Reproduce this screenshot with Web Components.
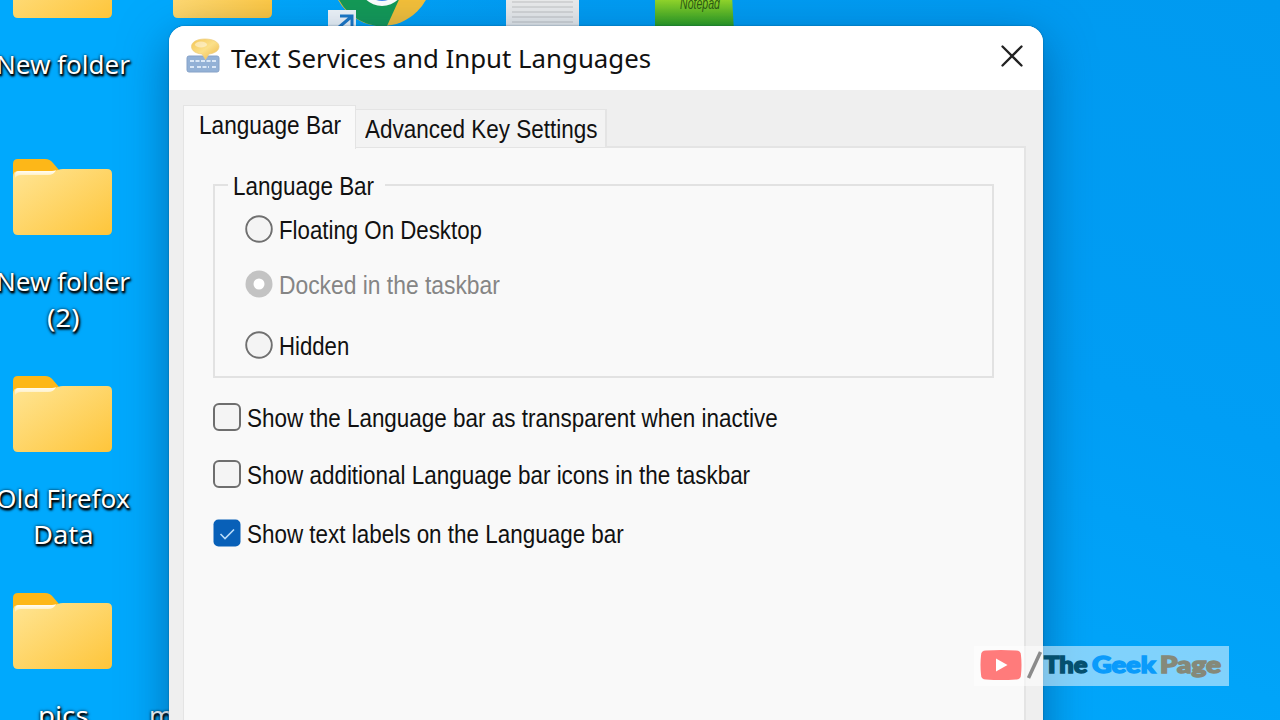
<!DOCTYPE html>
<html lang="en">
<head>
<meta charset="utf-8">
<title>Text Services and Input Languages</title>
<style>
  body {
    margin: 0;
    width: 1280px;
    height: 720px;
    overflow: hidden;
    font-family: "Liberation Sans", Arial, sans-serif;
  }
</style>
</head>
<body>
<desk-top>
  <desk-icon style="left:-17px;top:-60px" kind="folder"><fit-text w="134">New folder</fit-text></desk-icon>
  <desk-icon style="left:-17px;top:157px" kind="folder"><fit-text w="134">New folder</fit-text><fit-text w="32">(2)</fit-text></desk-icon>
  <desk-icon style="left:-17px;top:374px" kind="folder"><fit-text w="134">Old Firefox</fit-text><fit-text w="61">Data</fit-text></desk-icon>
  <desk-icon style="left:-17px;top:591px" kind="folder"><fit-text w="51">pics</fit-text></desk-icon>
  <desk-icon style="left:143px;top:-60px" kind="folder"></desk-icon>
  <desk-icon style="left:81px;top:591px" kind="none"><fit-text w="24">m</fit-text></desk-icon>
  <desk-icon style="left:303px;top:-60px" kind="chrome"></desk-icon>
  <desk-icon style="left:463px;top:-60px" kind="note"></desk-icon>
  <desk-icon style="left:614px;top:-60px" kind="notepad"></desk-icon>

  <dialog-window>
    <fit-text slot="title" w="420">Text Services and Input Languages</fit-text>
    <tab-item slot="tabs" active><fit-text w="142">Language Bar</fit-text></tab-item>
    <tab-item slot="tabs"><fit-text w="233">Advanced Key Settings</fit-text></tab-item>
    <group-box>
      <fit-text slot="legend" w="141">Language Bar</fit-text>
      <option-row><fit-text w="203">Floating On Desktop</fit-text></option-row>
      <option-row style="margin-top:25px" checked disabled><fit-text w="221">Docked in the taskbar</fit-text></option-row>
      <option-row style="margin-top:31px"><fit-text w="70">Hidden</fit-text></option-row>
    </group-box>
    <option-row box style="margin-top:25px"><fit-text w="531">Show the Language bar as transparent when inactive</fit-text></option-row>
    <option-row box style="margin-top:27px"><fit-text w="503">Show additional Language bar icons in the taskbar</fit-text></option-row>
    <option-row box style="margin-top:29px" checked><fit-text w="377">Show text labels on the Language bar</fit-text></option-row>
  </dialog-window>

  <water-mark></water-mark>
</desk-top>

<script>
  // text squeezed or stretched to the width given in "w"
  class FitText extends HTMLElement {
    constructor() {
      super();
      this.attachShadow({mode: 'open'}).innerHTML = `
        <style>
          :host {display: block; flex: none; white-space: nowrap;}
          span {display: inline-block; transform-origin: 0 50%;}
        </style>
        <span><slot></slot></span>
      `;
    }
    connectedCallback() {
      let w = Number(this.getAttribute('w'));
      let span = this.shadowRoot.querySelector('span');
      this.style.width = w + 'px';
      span.style.transform = `scaleX(${w / span.offsetWidth})`;
    }
  }

  class DeskTop extends HTMLElement {
    constructor() {
      super();
      this.attachShadow({mode: 'open'}).innerHTML = `
        <style>
          :host {
            display: block; position: relative; width: 1280px; height: 720px; overflow: hidden;
            background: linear-gradient(200deg, #009af0 0%, #009ef5 38%, #00a7fb 70%, #00a9fd 100%);
          }
          .light {position: absolute; inset: 0 auto 0 0; width: 520px; background: linear-gradient(90deg, #00a9fd 35%, #00a9fd00);}
        </style>
        <div class="light"></div>
        <slot></slot>
      `;
    }
  }

  const pictures = {
    none: '',
    folder: `
      <defs>
        <linearGradient id="f" x1="0" y1="0" x2="1" y2="1"><stop offset="0" stop-color="#ffe594"/><stop offset="1" stop-color="#fec53a"/></linearGradient>
        <linearGradient id="w" x1="0" y1="0" x2="0" y2="1"><stop offset="0" stop-color="#fff"/><stop offset="1" stop-color="#ffe9a8"/></linearGradient>
      </defs>
      <path d="M30 40V7q0-5 5-5h27q5 0 8 4l6 7v27z" fill="#fdb718"/>
      <path d="M30 20q0-6 5-6h34q4 0 6-1 2-1 5-1h44q5 0 5 5v56q0 5-5 5H35q-5 0-5-5z" fill="url(#f)"/>
      <path d="M32 18q0-4 4-4h33q3 0 4-1-2 5-8 5H38q-4 0-6 3z" fill="url(#w)"/>`,
    chrome: `
      <circle cx="79" cy="36" r="50" fill="#f5c038"/>
      <path d="M30 36a50 50 0 0 0 54 50l20-44-46-16z" fill="#149a55"/>
      <circle cx="79" cy="43" r="23" fill="#fff"/><circle cx="79" cy="43" r="18" fill="#4387ee"/>
      <rect x="25" y="70" width="28" height="28" fill="#f3f7fb"/>
      <path d="M35 88L48 77M37 76h12v12" fill="none" stroke="#1c78c8" stroke-width="3"/>`,
    note: `
      <path d="M43 0h73v92H43z" fill="#ececec"/>
      <path d="M49 62h61M49 67h61M49 72h61M49 77h61M49 82h61" stroke="#cfcfcf" stroke-width="1.5"/>`,
    notepad: `
      <defs><linearGradient id="g" x1="0" y1="0" x2="0" y2="1"><stop offset=".6" stop-color="#a5e02c"/><stop offset=".95" stop-color="#249a1c"/></linearGradient></defs>
      <path d="M41 0h74l5 92H41z" fill="url(#g)"/>
      <text x="66" y="69" font-family="Liberation Sans" font-size="17" font-style="italic" textLength="40" lengthAdjust="spacingAndGlyphs" fill="#2d5a10">Notepad</text>`
  };

  class DeskIcon extends HTMLElement {
    constructor() {
      super();
      this.attachShadow({mode: 'open'}).innerHTML = `
        <style>
          :host {
            position: absolute; width: 160px; display: flex; flex-direction: column; align-items: center;
            color: #fff; font: 26px/36px "Noto Sans", sans-serif;
            text-shadow: 1px 2px 3px #000, 1px 2px 2px #000, 0 0 3px #000c;
          }
          svg {width: 160px; height: 106px; flex: none; overflow: visible; text-shadow: none;}
        </style>
        <svg viewBox="0 0 160 106">${pictures[this.getAttribute('kind')]}</svg>
        <slot></slot>
      `;
    }
  }

  class DialogWindow extends HTMLElement {
    constructor() {
      super();
      this.attachShadow({mode: 'open'}).innerHTML = `
        <style>
          :host {
            position: absolute; left: 169px; top: 26px; width: 874px; height: 760px;
            display: flex; flex-direction: column; overflow: hidden; box-sizing: border-box;
            background: #efefef; border-radius: 16px; color: #111;
            box-shadow: 0 0 2px #0358, 0 14px 48px #00386c85;
            font-size: 25px; line-height: 30px;
          }
          header {
            flex: none; height: 64px; box-sizing: border-box; padding: 0 20px 0 17px; background: #fff;
            display: flex; align-items: center; font: 26px/36px "Noto Sans", sans-serif;
          }
          .app {width: 34px; height: 36px; margin: -4px 11px 0 0;}
          .close {width: 22px; height: 22px; margin: -5px 0 0 auto;}
          nav {flex: none; display: flex; align-items: flex-end; height: 43px; margin: 15px 0 -2px 14px; z-index: 1;}
          main {
            flex: 1; margin: 0 17px 0 14px; padding: 24px 30px 0 29px; box-sizing: border-box;
            background: #f9f9f9; border: solid #e4e4e4; border-width: 2px 2px 0 1px;
          }
        </style>
        <header>
          <svg class="app" viewBox="0 0 34 36">
            <defs><linearGradient id="b" x1="0" y1="0" x2="1" y2="1"><stop offset="0" stop-color="#f5c653"/><stop offset=".5" stop-color="#fbe08a"/><stop offset="1" stop-color="#eeb544"/></linearGradient></defs>
            <rect x="1" y="18" width="32" height="16" rx="2" fill="#93b1d6" stroke="#86a2c8"/>
            <path d="M4 23h26M4 29h4M11 29h12M26 29h4" stroke="#dbe8f7" stroke-width="2.2" stroke-dasharray="4 1.5"/>
            <path d="M19 1c8 0 14 3 14 7.500S28 15.500 23 16L19.500 21.500 16 16C10 15.500 5.500 13 5.500 8.500S11 1 19 1z" fill="url(#b)" stroke="#eccb7b" stroke-width=".7"/>
            <ellipse cx="15" cy="6.500" rx="6" ry="3" fill="#fff" opacity=".45"/>
          </svg>
          <slot name="title"></slot>
          <svg class="close" viewBox="0 0 22 22"><path d="M1.500 1.500l19 19M20.500 1.500l-19 19" stroke="#222" stroke-width="2.300" stroke-linecap="round"/></svg>
        </header>
        <nav><slot name="tabs"></slot></nav>
        <main><slot></slot></main>
      `;
    }
  }

  class TabItem extends HTMLElement {
    constructor() {
      super();
      this.attachShadow({mode: 'open'}).innerHTML = `
        <style>
          :host {
            display: block; box-sizing: border-box; width: 251px; height: 39px; padding: 4px 0 0 9px;
            background: #f3f3f3; border: solid #e4e4e4; border-width: 1px 2px 1px 0;
          }
          :host([active]) {
            width: 173px; height: 44px; padding: 4px 0 0 15px; margin-bottom: -1px;
            background: #f9f9f9; border-width: 1px 1px 0 1px;
          }
        </style>
        <slot></slot>
      `;
    }
  }

  class GroupBox extends HTMLElement {
    constructor() {
      super();
      this.attachShadow({mode: 'open'}).innerHTML = `
        <style>
          :host {display: block;}
          fieldset {
            margin: 0; padding: 17px 0 0 30px; height: 206px; box-sizing: border-box;
            border: 2px solid #e2e2e2; min-width: 0;
          }
          legend {padding: 0 11px 0 5px; margin-left: -17px; height: 26px; line-height: 28px;}
        </style>
        <fieldset>
          <legend><slot name="legend"></slot></legend>
          <slot></slot>
        </fieldset>
      `;
    }
  }

  // radio button, or check box with the "box" attribute
  class OptionRow extends HTMLElement {
    constructor() {
      super();
      let box = this.hasAttribute('box');
      let checked = this.hasAttribute('checked');
      let mark;
      if (box) {
        mark = checked
          ? '<rect x=".5" y=".5" width="27" height="27" rx="5" fill="#0860b8"/><path d="M7.500 15l4.500 4.500 9-9" fill="none" stroke="#b9dcfa" stroke-width="1.600"/>'
          : '<rect x="1" y="1" width="26" height="26" rx="5" fill="#f4f4f4" stroke="#6e6e6e" stroke-width="2"/>';
      } else {
        mark = checked
          ? '<circle cx="14" cy="14" r="13.500" fill="#c3c3c3"/><circle cx="14" cy="14" r="5.500" fill="#fff"/>'
          : '<circle cx="14" cy="14" r="12.800" fill="#f4f4f4" stroke="#707070" stroke-width="1.900"/>';
      }
      this.attachShadow({mode: 'open'}).innerHTML = `
        <style>
          :host {display: flex; align-items: center; gap: 6px; height: 30px;}
          :host([disabled]) {color: #858585;}
          svg {width: 28px; height: 28px; flex: none; margin-top: -2px;}
        </style>
        <svg viewBox="0 0 28 28">${mark}</svg>
        <slot></slot>
      `;
    }
  }

  class WaterMark extends HTMLElement {
    constructor() {
      super();
      this.attachShadow({mode: 'open'}).innerHTML = `
        <style>
          :host {
            position: absolute; left: 974px; top: 646px; width: 255px; height: 40px;
            display: flex; align-items: center; box-sizing: border-box; padding-left: 6px;
            background: #ffffff80; font: 900 22px/30px Lato, sans-serif;
          }
          .play {width: 42px; height: 30px; margin-top: -3px;}
          .slash {width: 17px; height: 28px; margin: -2px 1px 0 4px;}
          fit-text {margin: -2px 5px 0 0; -webkit-text-stroke: 1.4px currentColor; stroke-linejoin: round;}
        </style>
        <svg class="play" viewBox="0 0 42 30"><path d="M6 .5Q21-.5 36 .5q5 0 5 5 1 9.500 0 19 0 5-5 5-15 1-30 0-5 0-5-5-1-9.500 0-19 0-5 5-5z" fill="#ff7b7b"/><path d="M16 8.500v13L27.500 15z" fill="#fff"/></svg>
        <svg class="slash" viewBox="0 0 17 28"><path d="M2.500 27L14.500 1" stroke="#8b8b8b" stroke-width="3.500"/></svg>
        <fit-text w="43" style="color:#04506f">The</fit-text>
        <fit-text w="63" style="color:#0a9bfb">Geek</fit-text>
        <fit-text w="61" style="color:#858979">Page</fit-text>
      `;
    }
  }

  customElements.define('fit-text', FitText);
  customElements.define('desk-top', DeskTop);
  customElements.define('desk-icon', DeskIcon);
  customElements.define('dialog-window', DialogWindow);
  customElements.define('tab-item', TabItem);
  customElements.define('group-box', GroupBox);
  customElements.define('option-row', OptionRow);
  customElements.define('water-mark', WaterMark);

  // fonts inherited from the parents' shadow styles change the widths, so fit once more
  document.querySelectorAll('fit-text').forEach(el => el.connectedCallback());
</script>
</body>
</html>
